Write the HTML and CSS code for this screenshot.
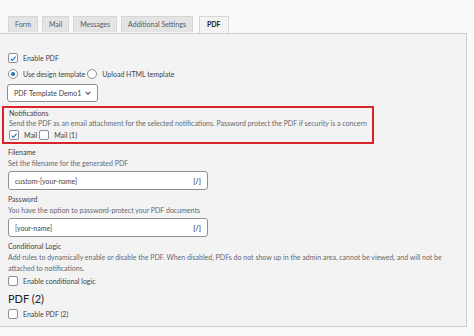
FILE: index.html
```html
<!DOCTYPE html>
<html>
<head>
<meta charset="utf-8">
<link rel="stylesheet" href="styles.css">
</head>
<body>
<div class="page">
  <div class="tabs">
    <div class="tab">Form</div>
    <div class="tab">Mail</div>
    <div class="tab">Messages</div>
    <div class="tab">Additional Settings</div>
    <div class="tab active">PDF</div>
  </div>
  <div class="panel">
    <div class="row"><span class="cb checked"><svg viewBox="0 0 10 10"><path d="M2 5.2 L4.2 7.3 L8.2 2.6" /></svg></span><span class="lbl">Enable PDF</span></div>
    <div class="row radios"><span class="radio on"></span><span class="lbl">Use design template</span><span class="radio"></span><span class="lbl">Upload HTML template</span></div>
    <div class="select">PDF Template Demo1 <svg viewBox="0 0 10 10"><path d="M2 3.5 L5 6.5 L8 3.5"/></svg></div>
    <div class="notif">
      <div class="title">Notifications</div>
      <div class="desc">Send the PDF as an email attachment for the selected notifications. Password protect the PDF if security is a concern</div>
      <div class="row"><span class="cb checked"><svg viewBox="0 0 10 10"><path d="M2 5.2 L4.2 7.3 L8.2 2.6" /></svg></span><span class="lbl">Mail</span><span class="cb"></span><span class="lbl">Mail (1)</span></div>
    </div>
    <div class="field f1">
      <div class="title">Filename</div>
      <div class="desc">Set the filename for the generated PDF</div>
      <div class="input"><span>custom-[your-name]</span><span class="tag">[/]</span></div>
    </div>
    <div class="field f2">
      <div class="title">Password</div>
      <div class="desc">You have the option to password-protect your PDF documents</div>
      <div class="input"><span>[your-name]</span><span class="tag">[/]</span></div>
    </div>
    <div class="field f3">
      <div class="title">Conditional Logic</div>
      <div class="desc">Add rules to dynamically enable or disable the PDF. When disabled, PDFs do not show up in the admin area, cannot be viewed, and will not be attached to notifications.</div>
      <div class="row"><span class="cb"></span><span class="lbl">Enable conditional logic</span></div>
    </div>
    <div class="h2">PDF (2)</div>
    <div class="row"><span class="cb"></span><span class="lbl">Enable PDF (2)</span></div>
  </div>
</div>
</body>
</html>
```
FILE: styles.css
```css
html, body { margin: 0; padding: 0; }
body {
  width: 474px; height: 336px; overflow: hidden;
  background: #f9fafc;
  font-family: "Lato", sans-serif;
  font-size: 7px;
  color: #3c434a;
}
.page { padding-top: 16px; width: 467px; }
.tabs { display: flex; gap: 4px; padding-left: 8px; position: relative; z-index: 1; }
.tab {
  height: 16px; line-height: 15px; box-sizing: border-box;
  padding: 0 6px; background: #e4e4e4; border: 1px solid #d6d6d6; border-bottom: none;
  color: #5a5a5a; white-space: nowrap; font-size: 7px;
}
.tab:nth-child(5) { margin-left: 2px; }
.tab.active { background: #f3f3f3; color: #222; font-weight: bold; height: 17px; padding: 0 7px; }
.panel {
  background: #f3f3f3; border: 1px solid #cfcfcf; border-left: none;
  height: 294px; box-sizing: border-box;
  padding: 18px 0 0 8px;
}
.row { display: flex; align-items: center; height: 12px; white-space: nowrap; }
.row + .row { margin-top: 4px; }
.cb {
  width: 8px; height: 8px; border: 1px solid #8c8f94; border-radius: 2px; background: #fff;
  display: inline-flex; align-items: center; justify-content: center; margin-right: 5px; flex: none;
}
.cb svg { width: 9px; height: 9px; fill: none; stroke: #2271b1; stroke-width: 1.4; }
.lbl { margin-right: 2px; color: #3c434a; }
.radio {
  width: 8px; height: 8px; border: 1px solid #8c8f94; border-radius: 50%; background: #fff;
  display: inline-block; position: relative; margin-right: 5px; flex: none;
}
.radio.on::after { content: ""; position: absolute; left: 2px; top: 2px; width: 4px; height: 4px; border-radius: 50%; background: #2271b1; }
.select {
  margin-top: 4px; margin-left: -1px; height: 18px; box-sizing: border-box; white-space: nowrap;
  border: 1px solid #8c8f94; border-radius: 3px; background: #fff;
  display: inline-flex; align-items: center; padding: 0 5px 0 6px; gap: 3px;
}
.select svg { width: 8px; height: 8px; fill: none; stroke: #50575e; stroke-width: 1.3; }
.notif {
  margin: 4px 0 0 -6px; width: 372px; height: 38px; box-sizing: border-box;
  border: 2px solid #d8232a; padding: 0 0 0 5px;
}
.notif .title { line-height: 10px; }
.title { line-height: 11px; color: #3c434a; }
.desc { line-height: 11px; color: #646970; width: 440px; }
.notif .row { margin-top: 0; }
.f1 { margin-top: 3px; }
.f2 { margin-top: 4px; }
.f3 { margin-top: 4px; }
.input {
  margin-top: 2px; width: 200px; height: 19px; box-sizing: border-box;
  border: 1px solid #8c8f94; border-radius: 3px; background: #fff;
  display: flex; align-items: center; justify-content: space-between; padding: 0 6px;
}
.tag { font-weight: bold; color: #50575e; }
.field .row { margin-top: 1px; }
.h2 { font-size: 11px; margin-top: 5px; line-height: 14px; color: #1d2327; }
.h2 + .row { margin-top: 2px; }
```
